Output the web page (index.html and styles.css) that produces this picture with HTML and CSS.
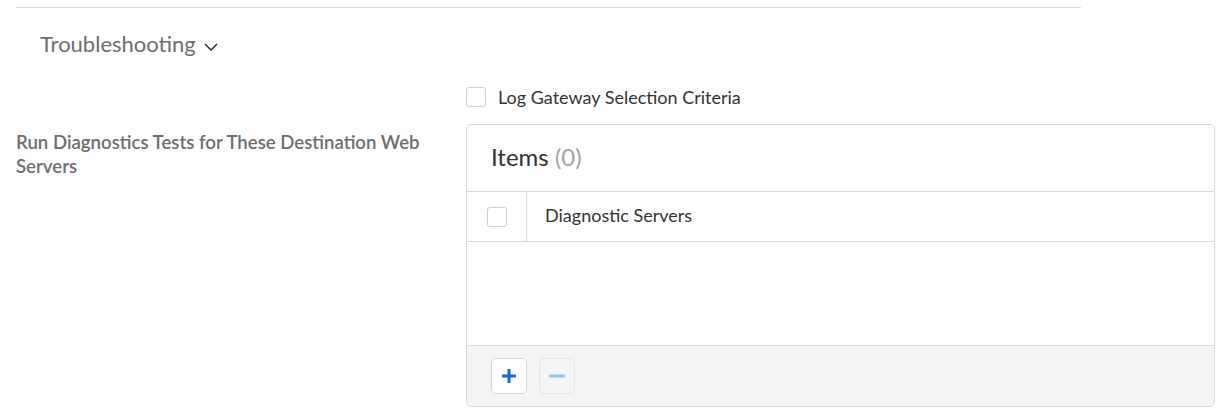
FILE: index.html
```html
<!DOCTYPE html>
<html lang="en">
<head>
    <meta charset="UTF-8">
    <title>Troubleshooting</title>
    <link rel="stylesheet" href="styles.css">
</head>
<body>
    <div class="page">
        <div class="divider"></div>

        <button class="section-toggle" type="button">
            Troubleshooting
            <svg class="chevron" width="14" height="8" viewBox="0 0 14 8"><path d="M1 1l6 6 6-6" fill="none" stroke="#222" stroke-width="1.4"/></svg>
        </button>

        <div class="form-row check-row">
            <div class="form-label"></div>
            <label class="check-field">
                <span class="checkbox"></span>
                Log Gateway Selection Criteria
            </label>
        </div>

        <div class="form-row">
            <div class="form-label">Run Diagnostics Tests for These Destination Web Servers</div>
            <div class="items-table">
                <div class="items-header">Items <span class="count">(0)</span></div>
                <div class="items-row">
                    <div class="cell-check"><span class="checkbox"></span></div>
                    <div class="cell-name">Diagnostic Servers</div>
                </div>
                <div class="items-body"></div>
                <div class="items-footer">
                    <button class="icon-btn" type="button">
                        <svg width="16" height="16" viewBox="0 0 16 16"><path d="M8 1v14M1 8h14" stroke="#0a70d2" stroke-width="3"/></svg>
                    </button>
                    <button class="icon-btn disabled" type="button">
                        <svg width="16" height="16" viewBox="0 0 16 16"><path d="M1 8h14" stroke="#94c1ea" stroke-width="3" stroke-linecap="round"/></svg>
                    </button>
                </div>
            </div>
        </div>
    </div>
</body>
</html>
```

FILE: styles.css
```css
body { margin: 0; font-family: Lato, "Open Sans", sans-serif; background: #fff; color: #333; }
.page { padding: 7px 15px 0 16px; }
.divider { width: 1065px; height: 1px; background: #dcdcdc; }

.section-toggle {
    display: flex;
    align-items: center;
    gap: 8px;
    margin: 21px 0 0 24px;
    padding: 0;
    border: none;
    background: none;
    font-family: inherit;
    font-size: 22px;
    color: #6d6d6d;
    line-height: 30px;
}
.chevron { margin-top: 5px; }

.form-row { display: flex; }
.form-label {
    width: 450px;
    flex: none;
    font-size: 18.6px;
    font-weight: 600;
    color: #6d6d6d;
    line-height: 24px;
    padding-right: 26px;
    box-sizing: border-box;
    padding-top: 6px;
}
.check-row { margin-top: 27px; margin-bottom: 16px; }
.check-row .form-label { padding-top: 0; }
.check-field {
    display: flex;
    align-items: center;
    gap: 12px;
    font-size: 18px;
    color: #333;
    line-height: 22px;
}
.checkbox {
    display: inline-block;
    width: 18px;
    height: 18px;
    border: 1px solid #cfcfcf;
    border-radius: 3px;
    background: #fff;
}

.items-table {
    width: 749px;
    border: 1px solid #d9d9d9;
    border-radius: 5px;
    overflow: hidden;
}
.items-header {
    height: 63px;
    line-height: 63px;
    padding: 0 0 3px 24px;
    font-size: 24px;
    color: #333;
    border-bottom: 1px solid #d9d9d9;
}
.items-header .count { color: #a3a3a3; }
.items-row {
    display: flex;
    height: 49px;
    border-bottom: 1px solid #d9d9d9;
}
.cell-check {
    width: 60px;
    display: flex;
    align-items: center;
    padding-left: 20px;
    box-sizing: border-box;
    border-right: 1px solid #d9d9d9;
}
.cell-name {
    display: flex;
    align-items: center;
    padding: 0 0 3px 18px;
    font-size: 18px;
    color: #333;
}
.items-body { height: 103px; border-bottom: 1px solid #d9d9d9; }
.items-footer {
    height: 60px;
    background: #f3f4f4;
    display: flex;
    align-items: center;
    gap: 12px;
    padding-left: 24px;
}
.icon-btn {
    width: 36px;
    height: 36px;
    padding: 0;
    border: 1px solid #d6d6d6;
    border-radius: 5px;
    background: #fff;
    display: flex;
    align-items: center;
    justify-content: center;
}
.icon-btn.disabled { background: #f3f4f4; border-color: #e6e6e6; }
```
